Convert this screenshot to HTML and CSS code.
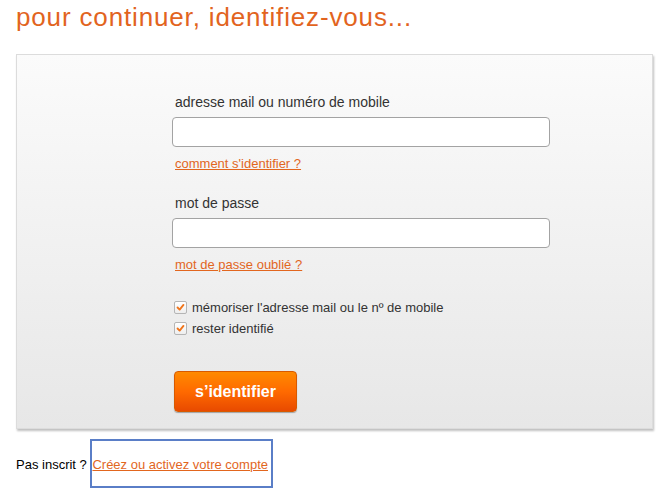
FILE: index.html
```
<!DOCTYPE html>
<html lang="fr">
<head>
<meta charset="utf-8">
<title>identifiez-vous</title>
<link rel="stylesheet" href="styles.css">
</head>
<body>
<h1 class="title">pour continuer, identifiez-vous...</h1>
<div class="panel">
  <form class="form">
    <label class="label">adresse mail ou numéro de mobile</label>
    <input class="field" type="text">
    <a class="link help" href="#">comment s'identifier ?</a>
    <label class="label label-pwd">mot de passe</label>
    <input class="field" type="password">
    <a class="link help" href="#">mot de passe oublié ?</a>
    <div class="checks">
      <div class="check"><span class="box"><svg viewBox="0 0 13 13" width="13" height="13"><path d="M3 6.5 L5.5 9 L10 3.5" fill="none" stroke="#f0741a" stroke-width="2.2" stroke-linecap="round" stroke-linejoin="round"/></svg></span>mémoriser l'adresse mail ou le nº de mobile</div>
      <div class="check"><span class="box"><svg viewBox="0 0 13 13" width="13" height="13"><path d="M3 6.5 L5.5 9 L10 3.5" fill="none" stroke="#f0741a" stroke-width="2.2" stroke-linecap="round" stroke-linejoin="round"/></svg></span>rester identifié</div>
    </div>
    <button class="btn" type="button">s’identifier</button>
  </form>
</div>
<p class="footer">Pas inscrit ? <span class="highlight"><a class="link" href="#">Créez ou activez votre compte</a><span class="mark"></span></span></p>
</body>
</html>
```
FILE: styles.css
```
html, body {
  margin: 0;
  padding: 0;
  background: #fff;
  font-family: "Liberation Sans", Arial, sans-serif;
}
body {
  min-height: 496px;
}
.title {
  margin: 0;
  padding: 3px 0 0 16px;
  font-size: 26px;
  letter-spacing: 0.85px;
  font-weight: normal;
  line-height: 29px;
  color: #e2641e;
}
.panel {
  margin: 22px 0 0 16px;
  width: 635px;
  height: 373px;
  border: 1px solid #dcdcdc;
  background: linear-gradient(#fbfbfb, #e7e7e7);
  box-shadow: 1px 2px 2px rgba(0,0,0,0.25);
}
.form {
  display: flex;
  flex-direction: column;
  align-items: flex-start;
  padding: 39px 0 0 155px;
}
.label {
  font-size: 14px;
  line-height: 16px;
  color: #333;
  margin-left: 3px;
}
.label-pwd {
  margin-top: 24px;
}
.field {
  box-sizing: border-box;
  width: 378px;
  height: 30px;
  margin-top: 7px;
  border: 1px solid #a3a3a3;
  border-radius: 4px;
  background: #fff;
}
.link {
  color: #e2661e;
  font-size: 13px;
  text-decoration: underline;
}
.help {
  margin: 9px 0 0 3px;
  line-height: 15px;
}
.checks {
  display: flex;
  flex-direction: column;
  gap: 6px;
  margin-top: 28px;
}
.check {
  display: flex;
  align-items: center;
  gap: 5px;
  font-size: 13px;
  line-height: 15px;
  color: #333;
  margin-left: 2px;
}
.box {
  box-sizing: border-box;
  width: 13px;
  height: 13px;
  border: 1px solid #b5b5b5;
  border-radius: 2px;
  background: linear-gradient(#fff, #eee);
  display: flex;
  align-items: center;
  justify-content: center;
}
.box svg {
  width: 11px;
  height: 11px;
}
.btn {
  margin: 35px 0 0 2px;
  width: 123px;
  height: 41px;
  border: 1px solid #d85a00;
  border-radius: 4px;
  background: linear-gradient(#ff8a00, #ff6a00 50%, #e84a00);
  color: #fff;
  font-family: "Liberation Sans", Arial, sans-serif;
  font-size: 16px;
  font-weight: bold;
  box-shadow: 0 1px 1px rgba(0,0,0,0.3);
  cursor: pointer;
}
.footer {
  margin: 28px 0 0 16px;
  font-size: 13px;
  line-height: 15px;
  color: #000;
}
.highlight {
  position: relative;
  margin-left: 2px;
}
.mark {
  position: absolute;
  left: -2px;
  top: -18px;
  width: 179px;
  height: 45px;
  border: 2px solid #5a7ec7;
}
```
